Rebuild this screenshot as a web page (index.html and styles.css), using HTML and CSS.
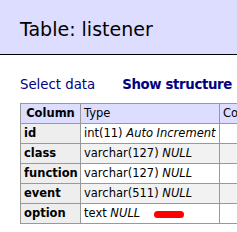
FILE: index.html
```html
<!DOCTYPE html>
<html lang="en">
  <head>
    <meta charset="UTF-8" />
    <title>Table: listener</title>
    <link rel="stylesheet" href="styles.css">
  </head>
  <body>
    <h2 class="page-title">Table: listener</h2>
    <p class="links">
      <a href="#">Select data</a>
      <a href="#" class="active">Show structure</a>
    </p>
    <table class="structure">
      <colgroup>
        <col class="col-name" />
        <col class="col-type" />
        <col class="col-comment" />
      </colgroup>
      <thead>
        <tr>
          <th>Column</th>
          <td>Type</td>
          <td>Comment</td>
        </tr>
      </thead>
      <tbody>
        <tr>
          <th>id</th>
          <td>int(11) <i>Auto Increment</i></td>
          <td></td>
        </tr>
        <tr>
          <th>class</th>
          <td>varchar(127) <i>NULL</i></td>
          <td></td>
        </tr>
        <tr>
          <th>function</th>
          <td>varchar(127) <i>NULL</i></td>
          <td></td>
        </tr>
        <tr>
          <th>event</th>
          <td>varchar(511) <i>NULL</i></td>
          <td></td>
        </tr>
        <tr>
          <th>option</th>
          <td>text <i>NULL</i><span class="mark"></span></td>
          <td></td>
        </tr>
      </tbody>
    </table>
  </body>
</html>
```

FILE: styles.css
```css
html,
body {
  overflow: hidden;
}
body {
  margin: 0;
  font-family: "DejaVu Sans", Verdana, sans-serif;
  color: #000;
  background: #fff;
}
.page-title {
  margin: 0;
  padding: 17px 20px 13px;
  font-size: 19px;
  line-height: 24px;
  font-weight: normal;
  background: #ddf;
  border-bottom: 1px solid #000;
  white-space: nowrap;
}
.links {
  display: flex;
  gap: 27px;
  margin: 21px 0 10px;
  padding-left: 20px;
  font-size: 13.3px;
  line-height: 17px;
  white-space: nowrap;
}
.links a {
  color: #000080;
  text-decoration: none;
}
.links a.active {
  font-weight: bold;
  letter-spacing: -0.35px;
}
.structure {
  margin-left: 20px;
  border-collapse: collapse;
  table-layout: fixed;
  width: 280px;
  font-size: 11.5px;
  line-height: 15px;
}
.col-name {
  width: 60px;
}
.col-type {
  width: 139px;
}
.col-comment {
  width: 81px;
}
.structure th,
.structure td {
  border: 1px solid #999;
  padding: 2px 3px;
  text-align: left;
  white-space: nowrap;
  overflow: hidden;
}
.structure thead th,
.structure thead td {
  background: #ddf;
}
.structure thead th {
  text-align: center;
}
.structure tbody th {
  background: #eee;
}
.structure tbody tr:nth-child(2n) td {
  background: #f2f2f2;
}
.mark {
  display: inline-block;
  width: 30px;
  height: 7px;
  margin-left: 14px;
  vertical-align: -1px;
  background: #f00;
  border-radius: 4px;
}
```
